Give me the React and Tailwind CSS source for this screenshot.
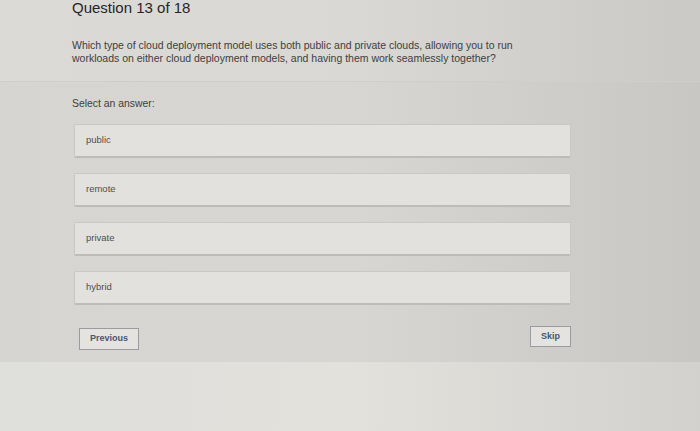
import React from "react";

const answers = ["public", "remote", "private", "hybrid"];

export default function App() {
  return (
    <div className="w-[700px] h-[431px] overflow-hidden flex flex-col font-['Liberation_Sans',Arial,sans-serif] bg-[#dcdbd7]">
      {/* Question header */}
      <div className="h-[82px] shrink-0 pl-[72px] bg-linear-to-r from-[#dbdad6] via-[#d9d8d4] to-[#cac9c5] border-b border-[#cfcecb]">
        <h1 className="text-[15px] leading-[18px] text-[#262626] -mt-[1px]">Question 13 of 18</h1>
        <p className="mt-[22px] text-[10.5px] leading-[13px] text-[#404040] w-[460px]">
          Which type of cloud deployment model uses both public and private clouds, allowing you to run
          workloads on either cloud deployment models, and having them work seamlessly together?
        </p>
      </div>

      {/* Answers */}
      <div className="h-[280px] shrink-0 pl-[72px] pt-[15px] bg-linear-to-r from-[#d6d5d1] via-[#d7d6d2] to-[#c8c7c3]">
        <p className="text-[10.4px] leading-[14px] text-[#404040]">Select an answer:</p>
        <div className="mt-[13px] ml-[2px] w-[497px] flex flex-col gap-[15px]">
          {answers.map((a) => (
            <div
              key={a}
              className="h-[34px] flex items-center pl-[11px] bg-[#e2e1dd] border border-[#c9c8c4] border-b-[2px] border-b-[#bdbcb8] rounded-[2px] text-[9.5px] text-[#4f4f4f]"
            >
              {a}
            </div>
          ))}
        </div>
        <div className="mt-[21px] ml-[7px] w-[492px] flex justify-between items-start">
          <button className="w-[60px] h-[22px] mt-[2px] border border-[#9c9ba0] bg-[#e4e3e0] text-[9px] font-bold text-[#4b5672]">
            Previous
          </button>
          <button className="w-[41px] h-[21px] border border-[#9c9ba0] bg-[#e4e3e0] text-[9px] font-bold text-[#4b5672]">
            Skip
          </button>
        </div>
      </div>

      {/* Footer */}
      <div className="flex-1 bg-linear-to-r from-[#dfdfdb] via-[#e2e1dc] to-[#d2d1cd]"></div>
    </div>
  );
}
